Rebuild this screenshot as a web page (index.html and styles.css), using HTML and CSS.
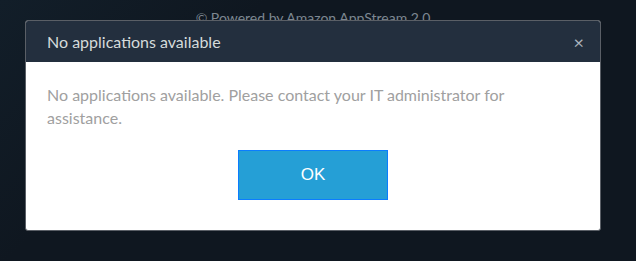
FILE: index.html
```html
<!DOCTYPE html>
<html>
<head>
<meta charset="utf-8">
<link rel="stylesheet" href="styles.css">
</head>
<body>
<div class="page">
  <div class="footer">© Powered by Amazon AppStream 2.0</div>
  <div class="modal">
    <div class="modal-header">
      <span class="modal-title">No applications available</span>
      <span class="close">×</span>
    </div>
    <div class="modal-body">
      <p class="message">No applications available. Please contact your IT administrator for assistance.</p>
      <div class="actions">
        <button class="ok">OK</button>
      </div>
    </div>
  </div>
</div>
</body>
</html>
```
FILE: styles.css
```css
html, body {
  margin: 0;
  padding: 0;
}
body {
  width: 636px;
  height: 261px;
  overflow: hidden;
  background: #0f1720;
  font-family: Lato, "Open Sans", sans-serif;
}
.page {
  position: relative;
  width: 636px;
  height: 261px;
  background: linear-gradient(135deg, #121e29 0%, #0f1720 30%, #0f1720 70%, #0f1720 100%);
}
.footer {
  padding-top: 10px;
  text-align: center;
  padding-right: 10px;
  color: #7d8791;
  font-size: 14px;
  line-height: 16px;
}
.modal {
  position: absolute;
  top: 20px;
  left: 25px;
  width: 574px;
  border: 1px solid #5a5f66;
  border-radius: 3px;
  background: #ffffff;
  overflow: hidden;
}
.modal-header {
  height: 41px;
  background: #232f3e;
  display: flex;
  align-items: center;
  justify-content: space-between;
  padding: 0 16px 0 21px;
}
.modal-title {
  color: #d5dbdb;
  font-size: 16px;
}
.close {
  color: #aab3bb;
  font-size: 18px;
  line-height: 18px;
}
.modal-body {
  padding: 21px 20px 30px 21px;
}
.message {
  margin: 0;
  color: #a0a0a0;
  font-size: 16px;
  line-height: 23px;
}
.actions {
  display: flex;
  justify-content: center;
  padding-top: 21px;
}
.ok {
  width: 150px;
  height: 50px;
  background: #259fd6;
  border: 1px solid #0b7dff;
  color: #ffffff;
  font-family: "Liberation Sans", Arial, sans-serif;
  font-size: 17px;
  margin-right: 1px;
}
```
